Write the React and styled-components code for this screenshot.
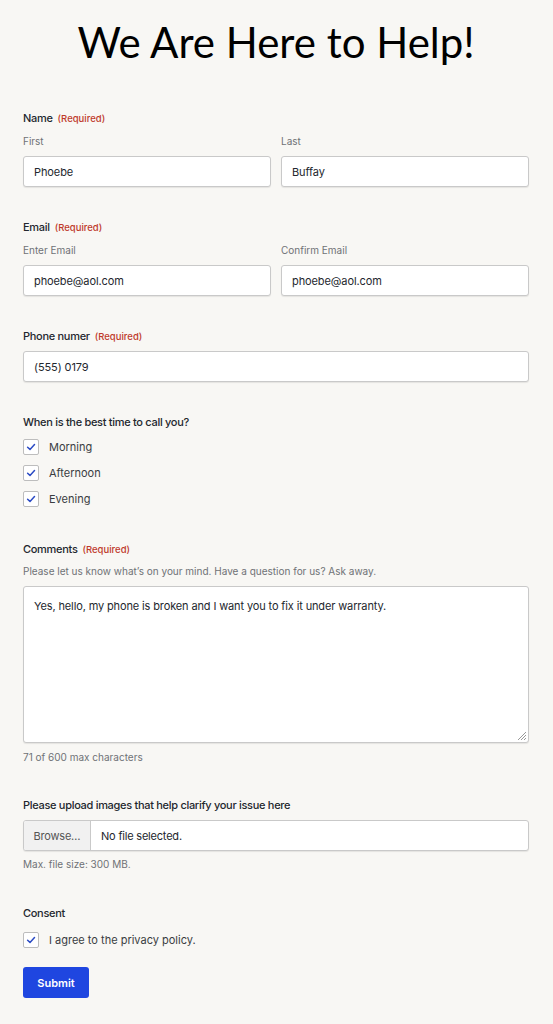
import React from 'react'
import styled, { createGlobalStyle } from 'styled-components'

const GlobalStyle = createGlobalStyle`
  html, body {
    margin: 0;
    padding: 0;
    background: #f8f7f4;
  }
  body {
    font-family: Inter, 'Liberation Sans', sans-serif;
    color: #23272e;
  }
`

const Page = styled.div`
  padding: 14px 24px 26px 23px;
`

const Title = styled.h1`
  margin: 0 0 41px;
  text-align: center;
  font-family: Lato, 'Liberation Sans', sans-serif;
  font-weight: 400;
  font-size: 42px;
  line-height: 56px;
  color: #000;
`

const Form = styled.form`
  display: flex;
  flex-direction: column;
  gap: 33px;
`

const Section = styled.div`
  display: flex;
  flex-direction: column;
  margin-top: ${p => p.extra || 0}px;
`

const Label = styled.div`
  font-size: 11px;
  font-weight: 500;
  letter-spacing: -0.3px;
  line-height: 14px;
  color: #23272e;
  margin-bottom: ${p => p.gap || 8}px;
`

const Required = styled.span`
  font-size: 9.5px;
  font-weight: 500;
  letter-spacing: 0;
  color: #bf3a2b;
  margin-left: 5px;
`

const SubLabel = styled.div`
  font-size: 10px;
  line-height: 13px;
  color: #6f7276;
  margin-bottom: 8px;
`

const Row = styled.div`
  display: grid;
  grid-template-columns: 1fr 1fr;
  gap: 10px;
`

const Col = styled.div`
  display: flex;
  flex-direction: column;
`

const Input = styled.div`
  height: 29px;
  box-sizing: content-box;
  border: 1px solid #c9c9c9;
  border-radius: 3px;
  background: #fff;
  box-shadow: 0 1px 1px rgba(0, 0, 0, 0.08);
  display: flex;
  align-items: center;
  padding: 0 10px;
  font-size: 11px;
  letter-spacing: -0.1px;
  color: #23272e;
`

const TextArea = styled.div`
  position: relative;
  height: 157px;
  border: 1px solid #c9c9c9;
  border-radius: 3px;
  background: #fff;
  box-shadow: 0 1px 1px rgba(0, 0, 0, 0.08);
  padding: 12px 10px;
  box-sizing: border-box;
  font-size: 11px;
  letter-spacing: -0.13px;
  line-height: 15px;
`

const Grip = styled.svg`
  position: absolute;
  right: 1px;
  bottom: 1px;
`

const Hint = styled.div`
  font-size: 10px;
  line-height: 13px;
  color: #6f7276;
  margin-top: ${p => p.top || 0}px;
  margin-bottom: ${p => p.bottom || 0}px;
`

const Checks = styled.div`
  display: flex;
  flex-direction: column;
  gap: 10px;
`

const CheckRow = styled.label`
  display: flex;
  align-items: center;
  gap: 10px;
  font-size: 11px;
  line-height: 16px;
  color: #3a3d42;
`

const Box = styled.span`
  width: 14px;
  height: 14px;
  border: 1px solid #bdbdbd;
  border-radius: 2px;
  background: #fff;
  display: flex;
  align-items: center;
  justify-content: center;
`

const FileInput = styled.div`
  display: flex;
  height: 29px;
  box-sizing: content-box;
  border: 1px solid #c9c9c9;
  border-radius: 3px;
  background: #fff;
  box-shadow: 0 1px 1px rgba(0, 0, 0, 0.08);
  overflow: hidden;
  font-size: 11px;
  letter-spacing: -0.2px;
`

const Browse = styled.span`
  width: 66px;
  background: #f1f1f1;
  border-right: 1px solid #c9c9c9;
  display: flex;
  align-items: center;
  justify-content: center;
  color: #555;
`

const FileName = styled.span`
  display: flex;
  align-items: center;
  padding: 0 10px;
  color: #23272e;
`

const Submit = styled.button`
  align-self: flex-start;
  margin-top: 19px;
  width: 66px;
  height: 31px;
  border: none;
  border-radius: 3px;
  background: #1f46e0;
  color: #fff;
  font-family: Inter, 'Liberation Sans', sans-serif;
  font-size: 11px;
  font-weight: 600;
`

const Check = () => (
  <Box>
    <svg width="10" height="10" viewBox="0 0 10 10">
      <path d="M1.6 5.2 L4 7.4 L8.5 2.6" fill="none" stroke="#2b4bc4" strokeWidth="1.5" strokeLinecap="round" strokeLinejoin="round" />
    </svg>
  </Box>
)

const Text = ({ first, second, firstLabel, secondLabel }) => (
  <Row>
    <Col>
      <SubLabel>{firstLabel}</SubLabel>
      <Input>{first}</Input>
    </Col>
    <Col>
      <SubLabel>{secondLabel}</SubLabel>
      <Input>{second}</Input>
    </Col>
  </Row>
)

export default function App() {
  const times = ['Morning', 'Afternoon', 'Evening']
  return (
    <Page>
      <GlobalStyle />
      <Title>We Are Here to Help!</Title>
      <Form>
        <Section>
          <Label gap={9}>
            Name<Required>(Required)</Required>
          </Label>
          <Text firstLabel="First" secondLabel="Last" first="Phoebe" second="Buffay" />
        </Section>

        <Section>
          <Label gap={9}>
            Email<Required>(Required)</Required>
          </Label>
          <Text
            firstLabel="Enter Email"
            secondLabel="Confirm Email"
            first="phoebe@aol.com"
            second="phoebe@aol.com"
          />
        </Section>

        <Section>
          <Label gap={7}>
            Phone numer<Required>(Required)</Required>
          </Label>
          <Input>(555) 0179</Input>
        </Section>

        <Section>
          <Label gap={10}>When is the best time to call you?</Label>
          <Checks>
            {times.map(t => (
              <CheckRow key={t}>
                <Check />
                {t}
              </CheckRow>
            ))}
          </Checks>
        </Section>

        <Section extra={2}>
          <Label>
            Comments<Required>(Required)</Required>
          </Label>
          <Hint bottom={8}>Please let us know what’s on your mind. Have a question for us? Ask away.</Hint>
          <TextArea>
            Yes, hello, my phone is broken and I want you to fix it under warranty.
            <Grip width="12" height="12" viewBox="0 0 12 12">
              <path d="M11 3 L3 11 M11 6 L6 11 M11 9 L9 11" stroke="#999" strokeWidth="1" />
            </Grip>
          </TextArea>
          <Hint top={8}>71 of 600 max characters</Hint>
        </Section>

        <Section extra={1}>
          <Label>Please upload images that help clarify your issue here</Label>
          <FileInput>
            <Browse>Browse…</Browse>
            <FileName>No file selected.</FileName>
          </FileInput>
          <Hint top={7}>Max. file size: 300 MB.</Hint>
        </Section>

        <Section extra={2}>
          <Label gap={12}>Consent</Label>
          <CheckRow>
            <Check />
            I agree to the privacy policy.
          </CheckRow>
          <Submit type="button">Submit</Submit>
        </Section>
      </Form>
    </Page>
  )
}
